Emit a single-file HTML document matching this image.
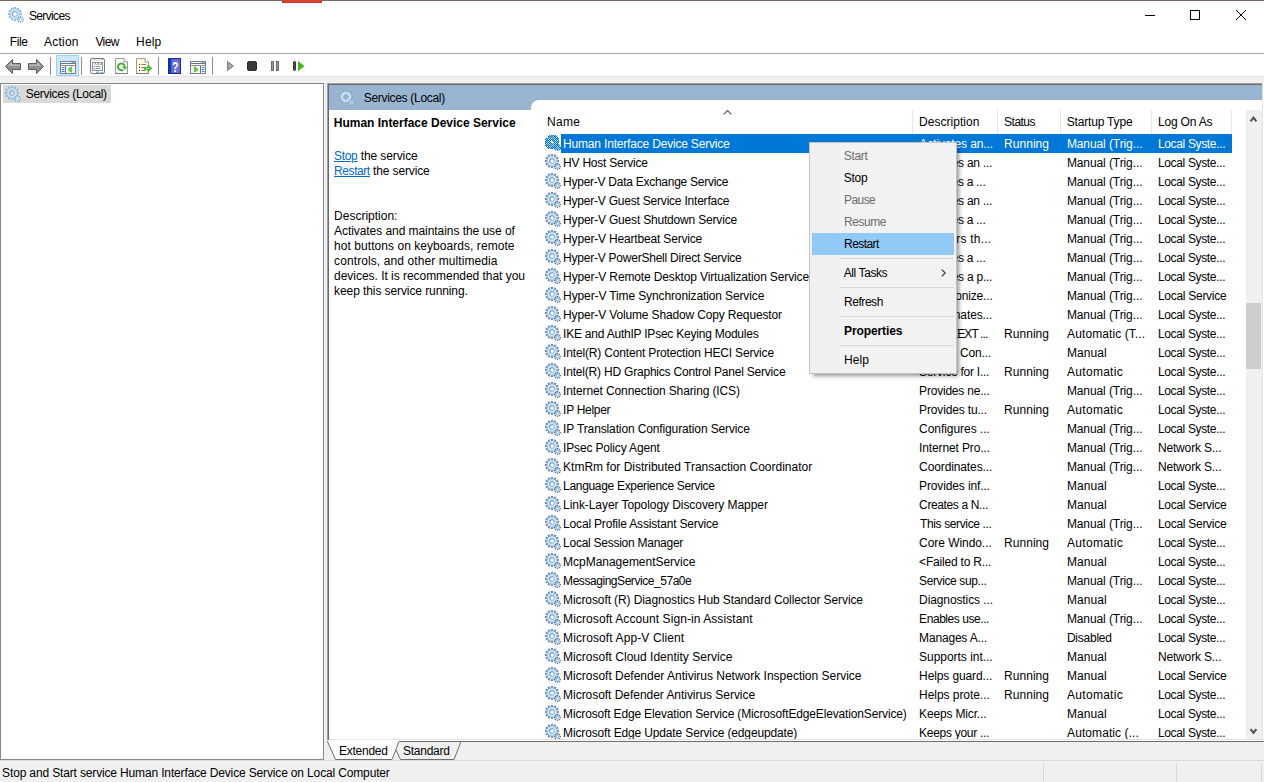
<!DOCTYPE html>
<html lang="en"><head><meta charset="utf-8"><title>Services</title>
<style>
html,body{margin:0;padding:0}
body{width:1264px;height:782px;overflow:hidden;background:#fff;color:#000;position:relative;
 font-family:"Liberation Sans",sans-serif;font-size:12px;cursor:default}
div,span,i,svg{position:absolute;display:block}
.t{white-space:pre;line-height:16px;height:16px;font-style:normal}
.b{font-weight:bold}
.u{text-decoration:underline;text-underline-offset:1px}
#titlebar,#menubar,#toolbar,#left,#right,#lhdr,#tabs,#status{left:0;top:0;width:1264px;height:782px}
#topline{left:0;top:0;width:1264px;height:1px;background:#76685f}
#redbar{left:282px;top:0;width:40px;height:3px;background:linear-gradient(#d4483a,#c8381f)}
#menuline{left:0;top:53px;width:1264px;height:1px;background:#a8a8a8}
#toolline{left:0;top:76px;width:1264px;height:1px;background:#e2e2e2}
#gap{left:0;top:77px;width:1264px;height:683px;background:#f0f0f0}
#leftbox{left:0;top:83px;width:322px;height:675px;background:#fff;border:1px solid #828790}
#treesel{left:3px;top:85px;width:108px;height:18px;background:#d9d9d9}
#rightbox{left:327px;top:83px;width:936px;height:657px;background:#fff;border-left:1px solid #a0a0a0;border-top:1px solid #a0a0a0;box-shadow:inset 1px 1px 0 #696969}
#rightedge{left:1262px;top:83px;width:2px;height:659px;background:#fff;border-left:1px solid #e3e3e3;box-sizing:border-box}
#botline{left:329px;top:739px;width:933px;height:1px;background:#e3e3e3}
#rightbot{left:327px;top:741px;width:937px;height:1px;background:#6e6e6e}
#band{left:329px;top:85px;width:933px;height:25px;background:#99b4d1}
#listbg{left:531px;top:100px;width:731px;height:639px;background:#fff;border-top-left-radius:8px}
.sep{top:110px;width:1px;height:24px;background:#e5e5e5}
#rows{left:0;top:0;width:1246px;height:739px;overflow:hidden}
#selrow{left:561px;top:134px;width:671px;height:19px;background:#0078d7}
#vscroll{left:1246px;top:110px;width:16px;height:629px;background:#f0f0f0;overflow:hidden}
#thumb{left:0;top:193px;width:15px;height:66px;background:#cdcdcd}
#status{}
#statbg{left:0;top:760px;width:1264px;height:22px;background:#f0f0f0;border-top:1px solid #d9d9d9;box-sizing:border-box}
.ssep{top:763px;width:1px;height:19px;background:#d7d7d7}
#cmenu{left:809px;top:142px;width:146px;height:230px;background:#f2f2f2;border:1px solid #c4c4c4;box-shadow:3px 3px 4px -1px rgba(0,0,0,.42)}
#cmgut{left:0;top:0;width:30px;height:230px;background:#f0f0f0}
#cmhl{left:2px;top:90px;width:142px;height:22px;background:#91c9f7}
.cmsep{left:30px;width:114px;height:1px;background:#d7d7d7;margin-top:-143px}
</style></head>
<body>
<svg width="0" height="0" style="left:0;top:0"><defs>
<symbol id="gearb" viewBox="0 0 16 16" shape-rendering="crispEdges"><path fill="#98b0d0" d="M3 0h2v1h-2zM9 0h2v1h-2zM0 3h1v1h-1zM13 3h1v1h-1zM0 4h1v1h-1zM7 4h1v1h-1zM13 4h1v1h-1zM6 5h3v1h-3zM5 6h1v1h-1zM4 7h2v1h-2zM5 8h1v1h-1zM0 9h1v1h-1zM13 9h1v1h-1zM0 10h1v1h-1zM15 10h1v1h-1zM12 12h1v1h-1zM3 13h2v1h-2zM9 14h1v1h-1zM15 14h1v1h-1z"/><path fill="#90a8c8" d="M6 0h2v1h-2zM0 6h1v1h-1zM13 6h1v1h-1zM0 7h1v1h-1zM13 7h1v1h-1zM6 13h2v1h-2z"/><path fill="#88a8c8" d="M3 1h1v1h-1zM10 1h1v1h-1zM1 3h1v1h-1zM12 3h1v1h-1zM1 10h1v1h-1zM3 12h1v1h-1z"/><path fill="#90b0d0" d="M4 1h1v1h-1zM9 1h1v1h-1zM1 4h1v1h-1zM6 4h1v1h-1zM12 4h1v1h-1zM5 5h1v1h-1zM4 6h1v1h-1zM1 9h1v1h-1zM4 12h1v1h-1zM9 13h1v1h-1zM10 15h1v1h-1zM14 15h1v1h-1z"/><path fill="#a0c0d8" d="M5 1h1v1h-1zM8 1h1v1h-1zM1 5h1v1h-1zM12 5h1v1h-1zM1 8h1v1h-1zM12 8h1v1h-1zM13 10h1v1h-1zM5 12h1v1h-1zM8 12h1v1h-1z"/><path fill="#a0c0e0" d="M6 1h2v1h-2zM1 6h1v1h-1zM12 6h1v1h-1zM1 7h1v1h-1zM12 7h1v1h-1zM6 12h2v1h-2z"/><path fill="#a0b8d8" d="M3 2h1v1h-1zM10 2h1v1h-1zM2 3h1v1h-1zM11 3h1v1h-1zM9 6h1v1h-1zM9 7h1v1h-1zM8 8h1v1h-1zM6 9h2v1h-2zM2 10h1v1h-1zM3 11h1v1h-1z"/><path fill="#a8c8e0" d="M4 2h1v1h-1zM9 2h1v1h-1zM2 4h1v1h-1zM5 4h1v1h-1zM8 4h1v1h-1zM11 4h1v1h-1zM4 5h1v1h-1zM4 8h1v1h-1zM2 9h1v1h-1zM11 9h1v1h-1zM11 10h1v1h-1zM4 11h1v1h-1zM9 11h2v1h-2zM14 13h1v1h-1zM11 14h1v1h-1zM13 14h1v1h-1z"/><path fill="#b8d8e8" d="M5 2h1v1h-1zM8 2h1v1h-1zM2 5h1v1h-1zM11 5h1v1h-1zM2 8h1v1h-1zM11 8h1v1h-1zM5 11h1v1h-1zM8 11h1v1h-1z"/><path fill="#b8d8f0" d="M6 2h2v1h-2zM2 6h1v1h-1zM11 6h1v1h-1zM2 7h1v1h-1zM11 7h1v1h-1zM6 11h2v1h-2z"/><path fill="#b0d0e8" d="M3 3h1v1h-1zM10 3h1v1h-1zM3 10h1v1h-1zM11 11h1v1h-1zM13 11h1v1h-1zM11 13h1v1h-1zM13 13h1v1h-1zM12 14h1v1h-1z"/><path fill="#c8e8f8" d="M4 3h1v1h-1zM9 3h1v1h-1zM3 4h2v1h-2zM9 4h2v1h-2zM3 9h2v1h-2zM9 9h1v1h-1zM4 10h1v1h-1z"/><path fill="#d0e8f8" d="M5 3h4v1h-4zM3 5h1v1h-1zM10 5h1v1h-1zM3 6h1v1h-1zM10 6h1v1h-1zM3 7h1v1h-1zM10 7h1v1h-1zM3 8h1v1h-1zM10 8h1v1h-1zM5 10h4v1h-4z"/><path fill="#b0c8e0" d="M9 5h1v1h-1zM5 9h1v1h-1zM11 12h1v1h-1zM13 12h1v1h-1zM12 13h1v1h-1z"/><path fill="#98b8d0" d="M8 6h1v1h-1zM8 7h1v1h-1zM6 8h2v1h-2z"/><path fill="#b0d0e0" d="M9 8h1v1h-1zM8 9h1v1h-1zM12 11h1v1h-1z"/><path fill="#c0e0f0" d="M10 9h1v1h-1zM9 10h1v1h-1z"/><path fill="#8098c0" d="M12 9h1v1h-1zM9 12h1v1h-1zM12 15h1v1h-1z"/><path fill="#80a0c0" d="M10 10h1v1h-1zM14 10h1v1h-1zM15 12h1v1h-1z"/><path fill="#a8c0e0" d="M12 10h1v1h-1zM14 11h1v1h-1zM10 12h1v1h-1zM14 12h1v1h-1zM10 13h1v1h-1z"/><path fill="#88a0c0" d="M10 14h1v1h-1zM14 14h1v1h-1z"/></symbol>
<symbol id="geart" viewBox="0 0 16 16" shape-rendering="crispEdges"><path fill="#c8d0d8" d="M3 0h2v1h-2zM9 0h2v1h-2zM0 3h1v1h-1zM13 3h1v1h-1zM0 4h1v1h-1zM13 4h1v1h-1zM0 9h1v1h-1zM13 9h1v1h-1zM0 10h1v1h-1zM3 13h2v1h-2zM9 14h1v1h-1zM15 14h1v1h-1z"/><path fill="#90b0d0" d="M6 0h2v1h-2zM0 6h1v1h-1zM13 6h1v1h-1zM0 7h1v1h-1zM13 7h1v1h-1zM6 13h2v1h-2z"/><path fill="#d0d0d8" d="M2 1h1v1h-1zM11 1h1v1h-1zM1 2h1v1h-1zM12 2h1v1h-1zM8 6h1v1h-1zM8 7h1v1h-1zM6 8h2v1h-2zM15 10h1v1h-1zM1 11h1v1h-1zM2 12h1v1h-1zM15 13h1v1h-1z"/><path fill="#88b0d0" d="M3 1h1v1h-1zM10 1h1v1h-1zM1 3h1v1h-1zM12 3h1v1h-1zM1 10h1v1h-1zM3 12h1v1h-1z"/><path fill="#a0b8d8" d="M4 1h1v1h-1zM9 1h1v1h-1zM1 4h1v1h-1zM12 4h1v1h-1zM1 9h1v1h-1zM4 12h1v1h-1z"/><path fill="#c0d0e0" d="M5 1h1v1h-1zM8 1h1v1h-1zM1 5h1v1h-1zM12 5h1v1h-1zM1 8h1v1h-1zM12 8h1v1h-1zM13 10h1v1h-1zM5 12h1v1h-1zM8 12h1v1h-1z"/><path fill="#a0c0e0" d="M6 1h2v1h-2zM1 6h1v1h-1zM12 6h1v1h-1zM1 7h1v1h-1zM12 7h1v1h-1zM6 12h2v1h-2z"/><path fill="#a8c8e0" d="M3 2h1v1h-1zM10 2h1v1h-1zM2 3h1v1h-1zM11 3h1v1h-1zM2 10h1v1h-1zM12 10h1v1h-1zM3 11h1v1h-1z"/><path fill="#a0c8e8" d="M4 2h1v1h-1zM9 2h1v1h-1zM2 4h1v1h-1zM11 4h1v1h-1zM2 9h1v1h-1zM11 9h1v1h-1zM4 11h1v1h-1zM9 11h1v1h-1z"/><path fill="#b0d8f0" d="M5 2h1v1h-1zM8 2h1v1h-1zM2 5h1v1h-1zM11 5h1v1h-1zM2 8h1v1h-1zM11 8h1v1h-1zM5 11h1v1h-1zM8 11h1v1h-1zM11 11h1v1h-1zM13 11h1v1h-1zM11 13h1v1h-1zM13 13h1v1h-1zM12 14h1v1h-1z"/><path fill="#b8d8f0" d="M6 2h2v1h-2zM2 6h1v1h-1zM11 6h1v1h-1zM2 7h1v1h-1zM11 7h1v1h-1zM6 11h2v1h-2z"/><path fill="#a8d0e8" d="M3 3h1v1h-1zM10 3h1v1h-1zM3 10h1v1h-1zM11 10h1v1h-1zM10 11h1v1h-1zM14 12h1v1h-1z"/><path fill="#c0e0f8" d="M4 3h1v1h-1zM9 3h1v1h-1zM3 4h1v1h-1zM10 4h1v1h-1zM3 9h1v1h-1zM4 10h1v1h-1z"/><path fill="#c8e8f8" d="M5 3h4v1h-4zM4 4h1v1h-1zM9 4h1v1h-1zM3 5h1v1h-1zM10 5h1v1h-1zM3 6h1v1h-1zM10 6h1v1h-1zM3 7h1v1h-1zM10 7h1v1h-1zM3 8h1v1h-1zM10 8h1v1h-1zM4 9h1v1h-1zM9 9h1v1h-1zM5 10h4v1h-4z"/><path fill="#a0c0d0" d="M5 4h1v1h-1zM4 5h1v1h-1z"/><path fill="#90a0b0" d="M6 4h1v1h-1zM4 6h1v1h-1z"/><path fill="#98a8b8" d="M7 4h1v1h-1zM4 7h1v1h-1z"/><path fill="#b0c0d8" d="M8 4h1v1h-1zM4 8h1v1h-1z"/><path fill="#a0a8b8" d="M5 5h1v1h-1z"/><path fill="#c8c8d0" d="M6 5h1v1h-1zM5 6h1v1h-1z"/><path fill="#c8d0d0" d="M7 5h1v1h-1zM5 7h1v1h-1z"/><path fill="#a8b8c8" d="M8 5h1v1h-1zM5 8h1v1h-1z"/><path fill="#b0c8d8" d="M9 5h1v1h-1zM5 9h1v1h-1z"/><path fill="#a8b8d0" d="M9 6h1v1h-1zM6 9h1v1h-1z"/><path fill="#a8c0d0" d="M9 7h1v1h-1zM7 9h1v1h-1z"/><path fill="#b8c8d8" d="M8 8h1v1h-1z"/><path fill="#b8d0e0" d="M9 8h1v1h-1zM8 9h1v1h-1z"/><path fill="#c0e0f0" d="M10 9h1v1h-1zM12 11h1v1h-1zM11 12h1v1h-1zM13 12h1v1h-1z"/><path fill="#78a0c0" d="M12 9h1v1h-1zM9 12h1v1h-1zM12 15h1v1h-1z"/><path fill="#b8e0f0" d="M9 10h1v1h-1z"/><path fill="#80a0c0" d="M10 10h1v1h-1zM14 10h1v1h-1zM15 12h1v1h-1z"/><path fill="#c0d8e0" d="M14 11h1v1h-1z"/><path fill="#a8c8e8" d="M10 12h1v1h-1z"/><path fill="#ffffff" d="M12 12h1v1h-1z"/><path fill="#b8c8d0" d="M9 13h1v1h-1z"/><path fill="#b8d0e8" d="M10 13h1v1h-1z"/><path fill="#c8e0f0" d="M12 13h1v1h-1z"/><path fill="#c0d8e8" d="M14 13h1v1h-1zM11 14h1v1h-1zM13 14h1v1h-1z"/><path fill="#80a0c8" d="M10 14h1v1h-1zM14 14h1v1h-1z"/><path fill="#c0c8d0" d="M10 15h1v1h-1zM14 15h1v1h-1z"/></symbol>
<symbol id="gearl" viewBox="0 0 16 16" shape-rendering="crispEdges"><path fill="#e8f0f8" d="M3 0h1v1h-1zM10 0h1v1h-1zM0 3h1v1h-1zM13 3h1v1h-1zM0 10h1v1h-1zM3 13h1v1h-1z"/><path fill="#e0e8f0" d="M4 0h1v1h-1zM9 0h1v1h-1zM0 4h1v1h-1zM13 4h1v1h-1zM6 5h1v1h-1zM5 6h1v1h-1zM0 9h1v1h-1zM13 9h1v1h-1zM4 13h1v1h-1zM10 15h1v1h-1zM14 15h1v1h-1z"/><path fill="#90b0d8" d="M6 0h2v1h-2zM0 6h1v1h-1zM13 6h1v1h-1zM0 7h1v1h-1zM13 7h1v1h-1zM6 13h2v1h-2z"/><path fill="#f0f8f8" d="M2 1h1v1h-1zM11 1h1v1h-1zM1 2h1v1h-1zM12 2h1v1h-1zM1 11h1v1h-1zM2 12h1v1h-1z"/><path fill="#88b0d0" d="M3 1h1v1h-1zM10 1h1v1h-1zM1 3h1v1h-1zM12 3h1v1h-1zM1 10h1v1h-1zM3 12h1v1h-1z"/><path fill="#a0c0e0" d="M4 1h1v1h-1zM9 1h1v1h-1zM1 4h1v1h-1zM12 4h1v1h-1zM1 9h1v1h-1zM4 12h1v1h-1z"/><path fill="#d0e0f0" d="M5 1h1v1h-1zM8 1h1v1h-1zM1 5h1v1h-1zM12 5h1v1h-1zM1 8h1v1h-1zM12 8h1v1h-1zM14 11h1v1h-1zM5 12h1v1h-1zM8 12h1v1h-1zM9 13h1v1h-1z"/><path fill="#a0c8e0" d="M6 1h2v1h-2zM1 6h1v1h-1zM12 6h1v1h-1zM1 7h1v1h-1zM12 7h1v1h-1zM6 12h2v1h-2z"/><path fill="#b0d0e8" d="M3 2h1v1h-1zM10 2h1v1h-1zM2 3h1v1h-1zM11 3h1v1h-1zM2 10h1v1h-1zM3 11h1v1h-1zM14 12h1v1h-1z"/><path fill="#a0c8e8" d="M4 2h1v1h-1zM9 2h1v1h-1zM2 4h1v1h-1zM11 4h1v1h-1zM2 9h1v1h-1zM11 9h1v1h-1zM4 11h1v1h-1zM9 11h1v1h-1z"/><path fill="#b0d8f0" d="M5 2h1v1h-1zM8 2h1v1h-1zM2 5h1v1h-1zM11 5h1v1h-1zM2 8h1v1h-1zM11 8h1v1h-1zM5 11h1v1h-1zM8 11h1v1h-1zM11 11h1v1h-1zM13 11h1v1h-1zM11 13h1v1h-1zM13 13h1v1h-1zM12 14h1v1h-1z"/><path fill="#b8d8f0" d="M6 2h2v1h-2zM2 6h1v1h-1zM11 6h1v1h-1zM2 7h1v1h-1zM11 7h1v1h-1zM6 11h2v1h-2z"/><path fill="#a8d0e8" d="M3 3h1v1h-1zM10 3h1v1h-1zM3 10h1v1h-1zM11 10h1v1h-1zM10 11h1v1h-1z"/><path fill="#c0e0f8" d="M4 3h1v1h-1zM9 3h1v1h-1zM3 4h1v1h-1zM10 4h1v1h-1zM3 9h1v1h-1zM4 10h1v1h-1z"/><path fill="#c8e8f8" d="M5 3h4v1h-4zM4 4h1v1h-1zM9 4h1v1h-1zM3 5h1v1h-1zM10 5h1v1h-1zM3 6h1v1h-1zM10 6h1v1h-1zM3 7h1v1h-1zM10 7h1v1h-1zM3 8h1v1h-1zM10 8h1v1h-1zM4 9h1v1h-1zM9 9h1v1h-1zM5 10h4v1h-4z"/><path fill="#a0c0d0" d="M5 4h1v1h-1zM4 5h1v1h-1z"/><path fill="#90a0b0" d="M6 4h1v1h-1zM4 6h1v1h-1z"/><path fill="#98a8b8" d="M7 4h1v1h-1zM4 7h1v1h-1z"/><path fill="#b0c0d8" d="M8 4h1v1h-1zM4 8h1v1h-1z"/><path fill="#a0b0c0" d="M5 5h1v1h-1z"/><path fill="#e8e8f0" d="M7 5h1v1h-1zM5 7h1v1h-1z"/><path fill="#b0c0d0" d="M8 5h1v1h-1zM5 8h1v1h-1z"/><path fill="#b0c8d8" d="M9 5h1v1h-1zM5 9h1v1h-1z"/><path fill="#e8f0f0" d="M8 6h1v1h-1zM8 7h1v1h-1zM6 8h2v1h-2zM9 14h1v1h-1zM15 14h1v1h-1z"/><path fill="#a8b8d0" d="M9 6h1v1h-1zM6 9h1v1h-1z"/><path fill="#a8c0d0" d="M9 7h1v1h-1zM7 9h1v1h-1z"/><path fill="#c0d0e0" d="M8 8h1v1h-1z"/><path fill="#b8d0e0" d="M9 8h1v1h-1zM8 9h1v1h-1z"/><path fill="#c0e0f0" d="M10 9h1v1h-1zM12 11h1v1h-1zM11 12h1v1h-1zM13 12h1v1h-1zM10 13h1v1h-1z"/><path fill="#78a0c0" d="M12 9h1v1h-1zM9 12h1v1h-1zM12 15h1v1h-1z"/><path fill="#b8e0f0" d="M9 10h1v1h-1z"/><path fill="#80a0c0" d="M10 10h1v1h-1z"/><path fill="#a8c8e0" d="M12 10h1v1h-1z"/><path fill="#c8e0f0" d="M13 10h1v1h-1zM12 13h1v1h-1z"/><path fill="#80a0c8" d="M14 10h1v1h-1zM15 12h1v1h-1z"/><path fill="#f0f0f8" d="M15 10h1v1h-1zM15 13h1v1h-1z"/><path fill="#a8c8e8" d="M10 12h1v1h-1z"/><path fill="#ffffff" d="M12 12h1v1h-1z"/><path fill="#d0e8f8" d="M14 13h1v1h-1z"/><path fill="#88a8c8" d="M10 14h1v1h-1zM14 14h1v1h-1z"/><path fill="#c8e0f8" d="M11 14h1v1h-1zM13 14h1v1h-1z"/></symbol>
<symbol id="gear" viewBox="0 0 16 16" shape-rendering="crispEdges"><path fill="#e0e8f0" d="M3 0h1v1h-1zM10 0h1v1h-1zM0 3h1v1h-1zM13 3h1v1h-1zM8 7h1v1h-1zM7 8h1v1h-1zM0 10h1v1h-1zM3 13h1v1h-1z"/><path fill="#c8d0e0" d="M4 0h1v1h-1zM9 0h1v1h-1zM0 4h1v1h-1zM13 4h1v1h-1zM0 9h1v1h-1zM4 13h1v1h-1zM10 15h1v1h-1zM14 15h1v1h-1z"/><path fill="#f0f0f8" d="M5 0h1v1h-1zM8 0h1v1h-1zM0 5h1v1h-1zM13 5h1v1h-1zM0 8h1v1h-1zM13 8h1v1h-1zM5 13h1v1h-1zM8 13h1v1h-1z"/><path fill="#6888b0" d="M6 0h2v1h-2zM3 1h1v1h-1zM10 1h1v1h-1zM1 3h1v1h-1zM12 3h1v1h-1zM0 6h1v1h-1zM13 6h1v1h-1zM0 7h1v1h-1zM13 7h1v1h-1zM1 10h1v1h-1zM3 12h1v1h-1zM6 13h2v1h-2z"/><path fill="#d8e0e8" d="M2 1h1v1h-1zM11 1h1v1h-1zM1 2h1v1h-1zM12 2h1v1h-1zM8 6h1v1h-1zM6 8h1v1h-1zM1 11h1v1h-1zM2 12h1v1h-1z"/><path fill="#7898b8" d="M4 1h1v1h-1zM9 1h1v1h-1zM1 4h1v1h-1zM12 4h1v1h-1zM1 9h1v1h-1zM4 12h1v1h-1z"/><path fill="#d8e0f0" d="M5 1h1v1h-1zM8 1h1v1h-1zM1 5h1v1h-1zM12 5h1v1h-1zM1 8h1v1h-1zM12 8h1v1h-1zM5 12h1v1h-1zM8 12h1v1h-1z"/><path fill="#80a0c0" d="M6 1h2v1h-2zM6 4h1v1h-1zM1 6h1v1h-1zM4 6h1v1h-1zM12 6h1v1h-1zM1 7h1v1h-1zM12 7h1v1h-1zM6 12h2v1h-2z"/><path fill="#90a8c8" d="M3 2h1v1h-1zM10 2h1v1h-1zM2 3h1v1h-1zM11 3h1v1h-1zM2 10h1v1h-1zM3 11h1v1h-1z"/><path fill="#90b0d0" d="M4 2h1v1h-1zM9 2h1v1h-1zM2 4h1v1h-1zM11 4h1v1h-1zM2 9h1v1h-1zM12 10h1v1h-1zM4 11h1v1h-1zM9 11h2v1h-2zM10 12h1v1h-1z"/><path fill="#a8c8e0" d="M5 2h1v1h-1zM8 2h1v1h-1zM2 5h1v1h-1zM11 5h1v1h-1zM2 8h1v1h-1zM11 8h1v1h-1zM5 11h1v1h-1zM8 11h1v1h-1zM11 11h1v1h-1zM13 11h1v1h-1zM11 13h1v1h-1zM13 13h1v1h-1zM12 14h1v1h-1z"/><path fill="#b8d8f0" d="M6 2h2v1h-2zM2 6h1v1h-1zM11 6h1v1h-1zM2 7h1v1h-1zM11 7h1v1h-1zM6 11h2v1h-2z"/><path fill="#a0c0d8" d="M3 3h1v1h-1zM10 3h1v1h-1zM9 7h1v1h-1zM7 9h1v1h-1zM3 10h1v1h-1z"/><path fill="#c8e8f8" d="M4 3h6v1h-6zM3 4h2v1h-2zM9 4h2v1h-2zM3 5h1v1h-1zM10 5h1v1h-1zM3 6h1v1h-1zM10 6h1v1h-1zM3 7h1v1h-1zM10 7h1v1h-1zM3 8h1v1h-1zM10 8h1v1h-1zM3 9h2v1h-2zM9 9h1v1h-1zM4 10h5v1h-5z"/><path fill="#b0d0e0" d="M5 4h1v1h-1zM4 5h1v1h-1zM9 10h1v1h-1z"/><path fill="#88a8c0" d="M7 4h1v1h-1zM4 7h1v1h-1z"/><path fill="#b0d0e8" d="M8 4h1v1h-1zM4 8h1v1h-1zM12 11h1v1h-1z"/><path fill="#6880a8" d="M5 5h1v1h-1z"/><path fill="#d0d8e0" d="M6 5h1v1h-1zM5 6h1v1h-1zM9 14h1v1h-1zM15 14h1v1h-1z"/><path fill="#d0d8e8" d="M7 5h1v1h-1zM5 7h1v1h-1z"/><path fill="#80a0b8" d="M8 5h1v1h-1zM5 8h1v1h-1z"/><path fill="#b8d8e8" d="M9 5h1v1h-1zM5 9h1v1h-1zM10 9h1v1h-1z"/><path fill="#a0b8d0" d="M9 6h1v1h-1zM6 9h1v1h-1z"/><path fill="#98b8d0" d="M8 8h1v1h-1z"/><path fill="#c0d8f0" d="M9 8h1v1h-1zM8 9h1v1h-1z"/><path fill="#88a8c8" d="M11 9h1v1h-1z"/><path fill="#507090" d="M12 9h1v1h-1zM9 12h1v1h-1zM15 12h1v1h-1zM12 15h1v1h-1z"/><path fill="#b8c8d8" d="M13 9h1v1h-1zM9 13h1v1h-1z"/><path fill="#e8f0f0" d="M14 9h1v1h-1z"/><path fill="#507098" d="M10 10h1v1h-1z"/><path fill="#98b0d0" d="M11 10h1v1h-1z"/><path fill="#b8d0e0" d="M13 10h1v1h-1zM14 11h1v1h-1zM10 13h1v1h-1zM11 14h1v1h-1zM13 14h1v1h-1z"/><path fill="#587898" d="M14 10h1v1h-1z"/><path fill="#e0e0e8" d="M15 10h1v1h-1zM15 13h1v1h-1z"/><path fill="#b8d0e8" d="M11 12h1v1h-1zM13 12h1v1h-1z"/><path fill="#ffffff" d="M12 12h1v1h-1z"/><path fill="#a0b8d8" d="M14 12h1v1h-1z"/><path fill="#c0d8e8" d="M12 13h1v1h-1z"/><path fill="#c8e0f0" d="M14 13h1v1h-1z"/><path fill="#6080a0" d="M10 14h1v1h-1zM14 14h1v1h-1z"/></symbol>
<symbol id="gearsel" viewBox="0 0 16 16" shape-rendering="crispEdges"><path fill="#e0e8f0" d="M3 0h1v1h-1zM0 3h1v1h-1zM8 7h1v1h-1zM7 8h1v1h-1z"/><path fill="#0078d7" d="M4 0h1v1h-1zM6 0h1v1h-1zM8 0h1v1h-1zM10 0h1v1h-1zM3 1h1v1h-1zM5 1h1v1h-1zM7 1h1v1h-1zM9 1h1v1h-1zM11 1h1v1h-1zM4 2h1v1h-1zM6 2h1v1h-1zM8 2h1v1h-1zM10 2h1v1h-1zM12 2h1v1h-1zM1 3h1v1h-1zM3 3h1v1h-1zM5 3h1v1h-1zM7 3h1v1h-1zM9 3h1v1h-1zM11 3h1v1h-1zM13 3h1v1h-1zM0 4h1v1h-1zM2 4h1v1h-1zM4 4h1v1h-1zM6 4h1v1h-1zM8 4h1v1h-1zM10 4h1v1h-1zM12 4h1v1h-1zM1 5h1v1h-1zM3 5h1v1h-1zM5 5h1v1h-1zM7 5h1v1h-1zM9 5h1v1h-1zM11 5h1v1h-1zM13 5h1v1h-1zM0 6h1v1h-1zM2 6h1v1h-1zM4 6h1v1h-1zM8 6h1v1h-1zM10 6h1v1h-1zM12 6h1v1h-1zM1 7h1v1h-1zM3 7h1v1h-1zM5 7h1v1h-1zM9 7h1v1h-1zM11 7h1v1h-1zM13 7h1v1h-1zM0 8h1v1h-1zM2 8h1v1h-1zM4 8h1v1h-1zM6 8h1v1h-1zM8 8h1v1h-1zM10 8h1v1h-1zM12 8h1v1h-1zM1 9h1v1h-1zM3 9h1v1h-1zM5 9h1v1h-1zM7 9h1v1h-1zM9 9h1v1h-1zM11 9h1v1h-1zM13 9h1v1h-1zM0 10h1v1h-1zM2 10h1v1h-1zM4 10h1v1h-1zM6 10h1v1h-1zM8 10h1v1h-1zM10 10h1v1h-1zM12 10h1v1h-1zM14 10h1v1h-1zM1 11h1v1h-1zM3 11h1v1h-1zM5 11h1v1h-1zM7 11h1v1h-1zM9 11h1v1h-1zM11 11h1v1h-1zM13 11h1v1h-1zM2 12h1v1h-1zM4 12h1v1h-1zM6 12h1v1h-1zM8 12h1v1h-1zM10 12h1v1h-1zM12 12h1v1h-1zM14 12h1v1h-1zM3 13h1v1h-1zM5 13h1v1h-1zM7 13h1v1h-1zM9 13h1v1h-1zM11 13h1v1h-1zM13 13h1v1h-1zM15 13h1v1h-1zM10 14h1v1h-1zM12 14h1v1h-1zM14 14h1v1h-1z"/><path fill="#f0f0f8" d="M5 0h1v1h-1zM0 5h1v1h-1zM13 8h1v1h-1zM8 13h1v1h-1z"/><path fill="#6888b0" d="M7 0h1v1h-1zM10 1h1v1h-1zM12 3h1v1h-1zM13 6h1v1h-1zM0 7h1v1h-1zM1 10h1v1h-1zM3 12h1v1h-1zM6 13h1v1h-1z"/><path fill="#c8d0e0" d="M9 0h1v1h-1zM13 4h1v1h-1zM0 9h1v1h-1zM4 13h1v1h-1zM10 15h1v1h-1zM14 15h1v1h-1z"/><path fill="#d8e0e8" d="M2 1h1v1h-1zM1 2h1v1h-1z"/><path fill="#7898b8" d="M4 1h1v1h-1zM1 4h1v1h-1z"/><path fill="#80a0c0" d="M6 1h1v1h-1zM1 6h1v1h-1zM12 7h1v1h-1zM7 12h1v1h-1z"/><path fill="#d8e0f0" d="M8 1h1v1h-1zM12 5h1v1h-1zM1 8h1v1h-1zM5 12h1v1h-1z"/><path fill="#90a8c8" d="M3 2h1v1h-1zM2 3h1v1h-1z"/><path fill="#a8c8e0" d="M5 2h1v1h-1zM2 5h1v1h-1zM11 8h1v1h-1zM8 11h1v1h-1z"/><path fill="#b8d8f0" d="M7 2h1v1h-1zM11 6h1v1h-1zM2 7h1v1h-1zM6 11h1v1h-1z"/><path fill="#90b0d0" d="M9 2h1v1h-1zM11 4h1v1h-1zM2 9h1v1h-1zM4 11h1v1h-1zM10 11h1v1h-1z"/><path fill="#c8e8f8" d="M4 3h1v1h-1zM6 3h1v1h-1zM8 3h1v1h-1zM3 4h1v1h-1zM9 4h1v1h-1zM10 5h1v1h-1zM3 6h1v1h-1zM10 7h1v1h-1zM3 8h1v1h-1zM4 9h1v1h-1zM5 10h1v1h-1zM7 10h1v1h-1z"/><path fill="#a0c0d8" d="M10 3h1v1h-1zM3 10h1v1h-1z"/><path fill="#b0d0e0" d="M5 4h1v1h-1zM4 5h1v1h-1zM9 10h1v1h-1z"/><path fill="#88a8c0" d="M7 4h1v1h-1zM4 7h1v1h-1z"/><path fill="#d0d8e0" d="M6 5h1v1h-1zM5 6h1v1h-1zM9 14h1v1h-1zM15 14h1v1h-1z"/><path fill="#80a0b8" d="M8 5h1v1h-1zM5 8h1v1h-1z"/><path fill="#a0b8d0" d="M9 6h1v1h-1zM6 9h1v1h-1z"/><path fill="#c0d8f0" d="M9 8h1v1h-1zM8 9h1v1h-1z"/><path fill="#b8d8e8" d="M10 9h1v1h-1z"/><path fill="#507090" d="M12 9h1v1h-1zM9 12h1v1h-1zM15 12h1v1h-1zM12 15h1v1h-1z"/><path fill="#e8f0f0" d="M14 9h1v1h-1z"/><path fill="#98b0d0" d="M11 10h1v1h-1z"/><path fill="#b8d0e0" d="M13 10h1v1h-1zM14 11h1v1h-1zM10 13h1v1h-1zM11 14h1v1h-1zM13 14h1v1h-1z"/><path fill="#e0e0e8" d="M15 10h1v1h-1z"/><path fill="#b0d0e8" d="M12 11h1v1h-1z"/><path fill="#b8d0e8" d="M11 12h1v1h-1zM13 12h1v1h-1z"/><path fill="#c0d8e8" d="M12 13h1v1h-1z"/><path fill="#c8e0f0" d="M14 13h1v1h-1z"/></symbol>
</defs></svg>
<div id="gap"></div><div id="topline"></div><div id="redbar"></div>
<div id="titlebar"><svg class="gi" width="16" height="16" style="left:8px;top:7px"><use href="#gearl"/></svg><span class="t" style="left:28.90px;top:8px;letter-spacing:-0.629px">Services</span><svg width="140" height="30" style="left:1124px;top:0" viewBox="0 0 140 30" fill="none" stroke="#000" stroke-width="1"><path d="M21 15.5h10"/><rect x="66.5" y="10.5" width="9" height="9"/><path d="M112 10l10 10M122 10l-10 10"/></svg></div>
<div id="menubar"><span class="t" style="left:9.70px;top:34px;letter-spacing:-0.367px">File</span><span class="t" style="left:44.10px;top:34px;letter-spacing:0.200px">Action</span><span class="t" style="left:95.40px;top:34px;letter-spacing:-0.567px">View</span><span class="t" style="left:136.10px;top:34px;letter-spacing:0.133px">Help</span><div id="menuline"></div></div>
<div id="toolbar"><svg width="320" height="24" style="left:0;top:54px" viewBox="0 54 320 24"><path d="M5.5 66.5l7-7v4h8v6h-8v4z" fill="#8f8f8f" stroke="#5c5c5c"/><path d="M8 66l4-4v2.500h7.500v1.500z" fill="#b9b9b9"/><path d="M43.5 66.5l-7-7v4h-8v6h8v4z" fill="#8f8f8f" stroke="#5c5c5c"/><path d="M41 66l-4-4v2.500h-7.500v1.500z" fill="#b9b9b9"/><path d="M50.5 57v18M81.5 57v18M158.5 57v18M212.500 57v18" stroke="#8e8e8e" fill="none"/><rect x="56.5" y="55.5" width="22" height="20" fill="#cce8ff" stroke="#99d1ff"/><rect x="60.5" y="61.5" width="15" height="12" fill="#fff" stroke="#808080"/><path d="M61 63.5h14" stroke="#5d7596"/><path d="M61 65.5h14" stroke="#8c8c8c"/><path d="M71.600 62.5h1M73.400 62.5h1" stroke="#5d7596"/><path d="M65.5 66v7" stroke="#56759d"/><path d="M62 67.5h2.500M62 69.5h2.500M62 71.5h2.500" stroke="#2f7fd6"/><path d="M72 66h2.500v7h-2.500z" fill="#f1f1f1"/><path d="M71.300 66.800v5.400l-3.400-2.700z" fill="#7fd068" stroke="#3db321" stroke-width=".9" stroke-linejoin="round"/><rect x="90.5" y="58.5" width="14" height="15" rx="1.6" fill="#fff" stroke="#6f7a8c"/><path d="M91.500 60h10.500" stroke="#d0d0d0"/><path d="M102.200 59.500h1" stroke="#5b7fb0"/><rect x="92.5" y="62.5" width="10" height="8" fill="#fafafa" stroke="#8e8e8e"/><rect x="95" y="62" width="8" height="2.600" fill="#949494"/><path d="M96 63.500h1.800M99.200 63.500h1.800" stroke="#fff"/><path d="M95.500 66.500h5M95.500 68.500h5" stroke="#9a9a9a"/><path d="M93.500 66.500h1.200" stroke="#2f9cf0"/><path d="M93.500 68.500h1.200" stroke="#8a8a8a"/><path d="M96 72.300h3" stroke="#4cc4f5" stroke-width="1.500"/><path d="M100 72.500h3" stroke="#b0b0b0"/><path d="M115.5 58.5h8.500l3.500 3.500v11.500h-12z" fill="#fdfdfd" stroke="#9a9a9a"/><path d="M124 58.500v3.500h3.500" fill="#fff" stroke="#9a9a9a"/><path d="M115 73.500h13" stroke="#7c7c7c"/><path d="M124.700 66.500a3.400 3.400 0 1 0-1.600 3.300" fill="none" stroke="#3db321" stroke-width="1.900"/><path d="M122 66.600h5.200l-2.300 3.500z" fill="#3db321"/><path d="M136.500 58.500h8.500l3.500 3.500v11.500h-12z" fill="#fffbdc" stroke="#9a9a9a"/><path d="M145 58.500v3.500h3.500" fill="#fff" stroke="#9a9a9a"/><path d="M136 73.500h13" stroke="#7c7c7c"/><path d="M139 64.500h1M139 67.500h1M139 70.500h1" stroke="#222"/><path d="M141.500 64.500h4.500M141.500 67.500h3M141.500 70.500h4" stroke="#7a7a7a"/><path d="M144.300 67.400h3.700v-2.400l3.800 3.400-3.800 3.400v-2.400h-3.700z" fill="#52c038" stroke="#2fa018" stroke-width=".7"/><path d="M146 68.400h3.500" stroke="#b6ecc0" stroke-width=".8"/><rect x="168" y="58" width="13" height="16" fill="#666cd4"/><rect x="168" y="58" width="3.200" height="16" fill="#1236bc"/><rect x="168.500" y="58.500" width="12" height="15" fill="none" stroke="#1b2a96"/><text x="175.200" y="71.600" font-family="Liberation Sans, sans-serif" font-size="15" font-weight="bold" fill="#fff" text-anchor="middle" textLength="6.500" lengthAdjust="spacingAndGlyphs">?</text><rect x="190.500" y="61.500" width="15" height="12" fill="#fff" stroke="#808080"/><path d="M191 63.500h14" stroke="#5d7596"/><path d="M191 65.500h14" stroke="#8c8c8c"/><path d="M201.600 62.500h1M203.400 62.500h1" stroke="#5d7596"/><path d="M200.500 66v7" stroke="#56759d"/><path d="M202 67.500h2.500M202 69.500h2.500M202 71.500h2.500" stroke="#2f7fd6"/><path d="M191.500 66h2v7h-2z" fill="#f1f1f1"/><path d="M194.700 66.800v5.400l3.400-2.700z" fill="#7fd068" stroke="#3db321" stroke-width=".9" stroke-linejoin="round"/><path d="M227.500 61.500v9l6-4.500z" fill="#a9a9a9" stroke="#7c7c7c"/><rect x="247.500" y="61.500" width="9" height="9" rx="1.500" fill="#3b3b3b" stroke="#2d2d2d"/><rect x="271.500" y="61.500" width="2" height="9" fill="#9a9a9a" stroke="#6c6c6c"/><rect x="276.500" y="61.500" width="2" height="9" fill="#9a9a9a" stroke="#6c6c6c"/><rect x="293.500" y="61.500" width="2" height="9" rx=".8" fill="#5a5a5a" stroke="#333"/><path d="M298 61v10.200l6.500-5.100z" fill="#3fb91f"/></svg><div id="toolline"></div></div>
<div id="left"><div id="leftbox"></div><div id="treesel"></div><svg class="gi" width="16" height="16" style="left:5px;top:86px"><use href="#geart"/></svg><span class="t" style="left:25.70px;top:86px;letter-spacing:-0.307px">Services (Local)</span></div>
<div id="right">
<div id="rightbox"></div><div id="rightedge"></div><div id="rightbot"></div><div id="band"></div><div id="listbg"></div><svg class="gi" width="16" height="16" style="left:339px;top:90px"><use href="#gearb"/></svg><span class="t" style="left:363.70px;top:90px;letter-spacing:-0.300px">Services (Local)</span>
<span class="t b" style="left:333.80px;top:115px;letter-spacing:-0.010px">Human Interface Device Service</span><span class="t u" style="left:333.90px;top:148px;letter-spacing:-0.267px;color:#0066cc">Stop</span><span class="t" style="left:360.70px;top:148px;letter-spacing:-0.100px">the service</span><span class="t u" style="left:334.10px;top:163px;letter-spacing:-0.433px;color:#0066cc">Restart</span><span class="t" style="left:373.10px;top:163px;letter-spacing:-0.140px">the service</span><span class="t" style="left:334.10px;top:208px;letter-spacing:-0.000px">Description:</span><span class="t" style="left:334.00px;top:223px;letter-spacing:-0.058px">Activates and maintains the use of</span><span class="t" style="left:334.10px;top:238px;letter-spacing:0.052px">hot buttons on keyboards, remote</span><span class="t" style="left:334.10px;top:253px;letter-spacing:0.093px">controls, and other multimedia</span><span class="t" style="left:334.10px;top:268px;letter-spacing:-0.035px">devices. It is recommended that you</span><span class="t" style="left:334.10px;top:283px;letter-spacing:-0.092px">keep this service running.</span>
<div id="lhdr"><i class="sep" style="left:912px"></i><i class="sep" style="left:997px"></i><i class="sep" style="left:1060px"></i><i class="sep" style="left:1151px"></i><i class="sep" style="left:1231px"></i><svg width="9" height="6" style="left:723px;top:109px" viewBox="0 0 9 6" fill="none" stroke="#5a5a5a" stroke-width="1.15"><path d="M.6 5.400l3.900-3.900 3.900 3.900"/></svg><span class="t" style="left:547.10px;top:114px;letter-spacing:0.233px">Name</span><span class="t" style="left:919.10px;top:114px;letter-spacing:0.030px">Description</span><span class="t" style="left:1004.10px;top:114px;letter-spacing:-0.520px">Status</span><span class="t" style="left:1066.70px;top:114px;letter-spacing:-0.173px">Startup Type</span><span class="t" style="left:1158.00px;top:114px;letter-spacing:-0.200px">Log On As</span></div>
<div id="rows">
<div id="selrow"></div>
<svg class="gi" width="16" height="16" style="left:545px;top:135px"><use href="#gearsel"/></svg><span class="t" style="left:563.10px;top:136px;letter-spacing:-0.186px;color:#fff">Human Interface Device Service</span><span class="t" style="left:919.30px;top:136px;letter-spacing:-0.114px;color:#fff">Activates an...</span><span class="t" style="left:1004.10px;top:136px;letter-spacing:0.033px;color:#fff">Running</span><span class="t" style="left:1066.90px;top:136px;letter-spacing:-0.093px;color:#fff">Manual (Trig...</span><span class="t" style="left:1157.90px;top:136px;letter-spacing:-0.338px;color:#fff">Local Syste...</span>
<svg class="gi" width="16" height="16" style="left:545px;top:154px"><use href="#gear"/></svg><span class="t" style="left:563.10px;top:155px;letter-spacing:-0.236px">HV Host Service</span><span class="t" style="left:919.10px;top:155px;letter-spacing:-0.243px">Provides an ...</span><span class="t" style="left:1066.90px;top:155px;letter-spacing:-0.093px">Manual (Trig...</span><span class="t" style="left:1157.90px;top:155px;letter-spacing:-0.338px">Local Syste...</span>
<svg class="gi" width="16" height="16" style="left:545px;top:173px"><use href="#gear"/></svg><span class="t" style="left:563.10px;top:174px;letter-spacing:-0.261px">Hyper-V Data Exchange Service</span><span class="t" style="left:919.10px;top:174px;letter-spacing:-0.262px">Provides a ...</span><span class="t" style="left:1066.90px;top:174px;letter-spacing:-0.093px">Manual (Trig...</span><span class="t" style="left:1157.90px;top:174px;letter-spacing:-0.338px">Local Syste...</span>
<svg class="gi" width="16" height="16" style="left:545px;top:192px"><use href="#gear"/></svg><span class="t" style="left:563.10px;top:193px;letter-spacing:-0.213px">Hyper-V Guest Service Interface</span><span class="t" style="left:919.10px;top:193px;letter-spacing:-0.243px">Provides an ...</span><span class="t" style="left:1066.90px;top:193px;letter-spacing:-0.093px">Manual (Trig...</span><span class="t" style="left:1157.90px;top:193px;letter-spacing:-0.338px">Local Syste...</span>
<svg class="gi" width="16" height="16" style="left:545px;top:211px"><use href="#gear"/></svg><span class="t" style="left:563.10px;top:212px;letter-spacing:-0.186px">Hyper-V Guest Shutdown Service</span><span class="t" style="left:919.10px;top:212px;letter-spacing:-0.262px">Provides a ...</span><span class="t" style="left:1066.90px;top:212px;letter-spacing:-0.093px">Manual (Trig...</span><span class="t" style="left:1157.90px;top:212px;letter-spacing:-0.338px">Local Syste...</span>
<svg class="gi" width="16" height="16" style="left:545px;top:230px"><use href="#gear"/></svg><span class="t" style="left:563.10px;top:231px;letter-spacing:-0.175px">Hyper-V Heartbeat Service</span><span class="t" style="left:919.10px;top:231px;letter-spacing:0.200px">Monitors th...</span><span class="t" style="left:1066.90px;top:231px;letter-spacing:-0.093px">Manual (Trig...</span><span class="t" style="left:1157.90px;top:231px;letter-spacing:-0.338px">Local Syste...</span>
<svg class="gi" width="16" height="16" style="left:545px;top:249px"><use href="#gear"/></svg><span class="t" style="left:563.10px;top:250px;letter-spacing:-0.231px">Hyper-V PowerShell Direct Service</span><span class="t" style="left:919.10px;top:250px;letter-spacing:-0.262px">Provides a ...</span><span class="t" style="left:1066.90px;top:250px;letter-spacing:-0.093px">Manual (Trig...</span><span class="t" style="left:1157.90px;top:250px;letter-spacing:-0.338px">Local Syste...</span>
<svg class="gi" width="16" height="16" style="left:545px;top:268px"><use href="#gear"/></svg><span class="t" style="left:563.10px;top:269px;letter-spacing:-0.134px">Hyper-V Remote Desktop Virtualization Service</span><span class="t" style="left:919.10px;top:269px;letter-spacing:-0.243px">Provides a p...</span><span class="t" style="left:1066.90px;top:269px;letter-spacing:-0.093px">Manual (Trig...</span><span class="t" style="left:1157.90px;top:269px;letter-spacing:-0.338px">Local Syste...</span>
<svg class="gi" width="16" height="16" style="left:545px;top:287px"><use href="#gear"/></svg><span class="t" style="left:563.10px;top:288px;letter-spacing:-0.120px">Hyper-V Time Synchronization Service</span><span class="t" style="left:919.10px;top:288px;letter-spacing:-0.185px">Synchronize...</span><span class="t" style="left:1066.90px;top:288px;letter-spacing:-0.093px">Manual (Trig...</span><span class="t" style="left:1157.90px;top:288px;letter-spacing:-0.275px">Local Service</span>
<svg class="gi" width="16" height="16" style="left:545px;top:306px"><use href="#gear"/></svg><span class="t" style="left:563.10px;top:307px;letter-spacing:-0.149px">Hyper-V Volume Shadow Copy Requestor</span><span class="t" style="left:919.10px;top:307px;letter-spacing:-0.108px">Coordinates...</span><span class="t" style="left:1066.90px;top:307px;letter-spacing:-0.093px">Manual (Trig...</span><span class="t" style="left:1157.90px;top:307px;letter-spacing:-0.338px">Local Syste...</span>
<svg class="gi" width="16" height="16" style="left:545px;top:325px"><use href="#gear"/></svg><span class="t" style="left:563.10px;top:326px;letter-spacing:-0.224px">IKE and AuthIP IPsec Keying Modules</span><span class="t" style="left:920.10px;top:326px;letter-spacing:-0.892px">The IKEEXT ...</span><span class="t" style="left:1004.10px;top:326px;letter-spacing:0.033px">Running</span><span class="t" style="left:1067.10px;top:326px;letter-spacing:0.093px">Automatic (T...</span><span class="t" style="left:1157.90px;top:326px;letter-spacing:-0.338px">Local Syste...</span>
<svg class="gi" width="16" height="16" style="left:545px;top:344px"><use href="#gear"/></svg><span class="t" style="left:563.10px;top:345px;letter-spacing:-0.164px">Intel(R) Content Protection HECI Service</span><span class="t" style="left:919.10px;top:345px;letter-spacing:-0.193px">Intel(R) Con...</span><span class="t" style="left:1066.90px;top:345px;letter-spacing:0.100px">Manual</span><span class="t" style="left:1157.90px;top:345px;letter-spacing:-0.338px">Local Syste...</span>
<svg class="gi" width="16" height="16" style="left:545px;top:363px"><use href="#gear"/></svg><span class="t" style="left:563.10px;top:364px;letter-spacing:-0.202px">Intel(R) HD Graphics Control Panel Service</span><span class="t" style="left:919.10px;top:364px;letter-spacing:-0.247px">Service for I...</span><span class="t" style="left:1004.10px;top:364px;letter-spacing:0.033px">Running</span><span class="t" style="left:1067.10px;top:364px;letter-spacing:0.275px">Automatic</span><span class="t" style="left:1157.90px;top:364px;letter-spacing:-0.338px">Local Syste...</span>
<svg class="gi" width="16" height="16" style="left:545px;top:382px"><use href="#gear"/></svg><span class="t" style="left:563.10px;top:383px;letter-spacing:-0.122px">Internet Connection Sharing (ICS)</span><span class="t" style="left:919.10px;top:383px;letter-spacing:-0.208px">Provides ne...</span><span class="t" style="left:1066.90px;top:383px;letter-spacing:-0.093px">Manual (Trig...</span><span class="t" style="left:1157.90px;top:383px;letter-spacing:-0.338px">Local Syste...</span>
<svg class="gi" width="16" height="16" style="left:545px;top:401px"><use href="#gear"/></svg><span class="t" style="left:563.10px;top:402px;letter-spacing:-0.300px">IP Helper</span><span class="t" style="left:919.10px;top:402px;letter-spacing:-0.154px">Provides tu...</span><span class="t" style="left:1004.10px;top:402px;letter-spacing:0.033px">Running</span><span class="t" style="left:1067.10px;top:402px;letter-spacing:0.275px">Automatic</span><span class="t" style="left:1157.90px;top:402px;letter-spacing:-0.338px">Local Syste...</span>
<svg class="gi" width="16" height="16" style="left:545px;top:420px"><use href="#gear"/></svg><span class="t" style="left:563.10px;top:421px;letter-spacing:-0.126px">IP Translation Configuration Service</span><span class="t" style="left:919.10px;top:421px;letter-spacing:-0.054px">Configures ...</span><span class="t" style="left:1066.90px;top:421px;letter-spacing:-0.093px">Manual (Trig...</span><span class="t" style="left:1157.90px;top:421px;letter-spacing:-0.338px">Local Syste...</span>
<svg class="gi" width="16" height="16" style="left:545px;top:439px"><use href="#gear"/></svg><span class="t" style="left:563.10px;top:440px;letter-spacing:-0.159px">IPsec Policy Agent</span><span class="t" style="left:919.10px;top:440px;letter-spacing:-0.136px">Internet Pro...</span><span class="t" style="left:1066.90px;top:440px;letter-spacing:-0.093px">Manual (Trig...</span><span class="t" style="left:1157.90px;top:440px;letter-spacing:-0.155px">Network S...</span>
<svg class="gi" width="16" height="16" style="left:545px;top:458px"><use href="#gear"/></svg><span class="t" style="left:563.10px;top:459px;letter-spacing:-0.009px">KtmRm for Distributed Transaction Coordinator</span><span class="t" style="left:919.10px;top:459px;letter-spacing:-0.115px">Coordinates...</span><span class="t" style="left:1066.90px;top:459px;letter-spacing:-0.093px">Manual (Trig...</span><span class="t" style="left:1157.90px;top:459px;letter-spacing:-0.155px">Network S...</span>
<svg class="gi" width="16" height="16" style="left:545px;top:477px"><use href="#gear"/></svg><span class="t" style="left:563.10px;top:478px;letter-spacing:-0.319px">Language Experience Service</span><span class="t" style="left:919.10px;top:478px;letter-spacing:-0.136px">Provides inf...</span><span class="t" style="left:1066.90px;top:478px;letter-spacing:0.100px">Manual</span><span class="t" style="left:1157.90px;top:478px;letter-spacing:-0.338px">Local Syste...</span>
<svg class="gi" width="16" height="16" style="left:545px;top:496px"><use href="#gear"/></svg><span class="t" style="left:563.10px;top:497px;letter-spacing:-0.069px">Link-Layer Topology Discovery Mapper</span><span class="t" style="left:919.10px;top:497px;letter-spacing:-0.377px">Creates a N...</span><span class="t" style="left:1066.90px;top:497px;letter-spacing:0.100px">Manual</span><span class="t" style="left:1157.90px;top:497px;letter-spacing:-0.275px">Local Service</span>
<svg class="gi" width="16" height="16" style="left:545px;top:515px"><use href="#gear"/></svg><span class="t" style="left:563.10px;top:516px;letter-spacing:-0.180px">Local Profile Assistant Service</span><span class="t" style="left:920.10px;top:516px;letter-spacing:-0.380px">This service ...</span><span class="t" style="left:1066.90px;top:516px;letter-spacing:-0.093px">Manual (Trig...</span><span class="t" style="left:1157.90px;top:516px;letter-spacing:-0.275px">Local Service</span>
<svg class="gi" width="16" height="16" style="left:545px;top:534px"><use href="#gear"/></svg><span class="t" style="left:563.10px;top:535px;letter-spacing:-0.260px">Local Session Manager</span><span class="t" style="left:919.10px;top:535px;letter-spacing:-0.058px">Core Windo...</span><span class="t" style="left:1004.10px;top:535px;letter-spacing:0.033px">Running</span><span class="t" style="left:1067.10px;top:535px;letter-spacing:0.275px">Automatic</span><span class="t" style="left:1157.90px;top:535px;letter-spacing:-0.338px">Local Syste...</span>
<svg class="gi" width="16" height="16" style="left:545px;top:553px"><use href="#gear"/></svg><span class="t" style="left:563.10px;top:554px;letter-spacing:-0.026px">McpManagementService</span><span class="t" style="left:919.10px;top:554px;letter-spacing:-0.193px">&lt;Failed to R...</span><span class="t" style="left:1066.90px;top:554px;letter-spacing:0.100px">Manual</span><span class="t" style="left:1157.90px;top:554px;letter-spacing:-0.338px">Local Syste...</span>
<svg class="gi" width="16" height="16" style="left:545px;top:572px"><use href="#gear"/></svg><span class="t" style="left:563.10px;top:573px;letter-spacing:-0.448px">MessagingService_57a0e</span><span class="t" style="left:919.10px;top:573px;letter-spacing:-0.385px">Service sup...</span><span class="t" style="left:1066.90px;top:573px;letter-spacing:-0.093px">Manual (Trig...</span><span class="t" style="left:1157.90px;top:573px;letter-spacing:-0.338px">Local Syste...</span>
<svg class="gi" width="16" height="16" style="left:545px;top:591px"><use href="#gear"/></svg><span class="t" style="left:563.10px;top:592px;letter-spacing:-0.100px">Microsoft (R) Diagnostics Hub Standard Collector Service</span><span class="t" style="left:919.10px;top:592px;letter-spacing:-0.107px">Diagnostics ...</span><span class="t" style="left:1066.90px;top:592px;letter-spacing:0.100px">Manual</span><span class="t" style="left:1157.90px;top:592px;letter-spacing:-0.338px">Local Syste...</span>
<svg class="gi" width="16" height="16" style="left:545px;top:610px"><use href="#gear"/></svg><span class="t" style="left:563.10px;top:611px;letter-spacing:0.079px">Microsoft Account Sign-in Assistant</span><span class="t" style="left:919.10px;top:611px;letter-spacing:-0.438px">Enables use...</span><span class="t" style="left:1066.90px;top:611px;letter-spacing:-0.093px">Manual (Trig...</span><span class="t" style="left:1157.90px;top:611px;letter-spacing:-0.338px">Local Syste...</span>
<svg class="gi" width="16" height="16" style="left:545px;top:629px"><use href="#gear"/></svg><span class="t" style="left:563.10px;top:630px;letter-spacing:0.110px">Microsoft App-V Client</span><span class="t" style="left:919.10px;top:630px;letter-spacing:-0.182px">Manages A...</span><span class="t" style="left:1066.90px;top:630px;letter-spacing:-0.229px">Disabled</span><span class="t" style="left:1157.90px;top:630px;letter-spacing:-0.338px">Local Syste...</span>
<svg class="gi" width="16" height="16" style="left:545px;top:648px"><use href="#gear"/></svg><span class="t" style="left:563.10px;top:649px;letter-spacing:0.016px">Microsoft Cloud Identity Service</span><span class="t" style="left:919.10px;top:649px;letter-spacing:-0.036px">Supports int...</span><span class="t" style="left:1066.90px;top:649px;letter-spacing:0.100px">Manual</span><span class="t" style="left:1157.90px;top:649px;letter-spacing:-0.155px">Network S...</span>
<svg class="gi" width="16" height="16" style="left:545px;top:667px"><use href="#gear"/></svg><span class="t" style="left:563.10px;top:668px;letter-spacing:-0.007px">Microsoft Defender Antivirus Network Inspection Service</span><span class="t" style="left:919.10px;top:668px;letter-spacing:-0.115px">Helps guard...</span><span class="t" style="left:1004.10px;top:668px;letter-spacing:0.033px">Running</span><span class="t" style="left:1066.90px;top:668px;letter-spacing:0.100px">Manual</span><span class="t" style="left:1157.90px;top:668px;letter-spacing:-0.275px">Local Service</span>
<svg class="gi" width="16" height="16" style="left:545px;top:686px"><use href="#gear"/></svg><span class="t" style="left:563.10px;top:687px;letter-spacing:-0.040px">Microsoft Defender Antivirus Service</span><span class="t" style="left:919.10px;top:687px;letter-spacing:-0.054px">Helps prote...</span><span class="t" style="left:1004.10px;top:687px;letter-spacing:0.033px">Running</span><span class="t" style="left:1067.10px;top:687px;letter-spacing:0.275px">Automatic</span><span class="t" style="left:1157.90px;top:687px;letter-spacing:-0.338px">Local Syste...</span>
<svg class="gi" width="16" height="16" style="left:545px;top:705px"><use href="#gear"/></svg><span class="t" style="left:563.10px;top:706px;letter-spacing:-0.156px">Microsoft Edge Elevation Service (MicrosoftEdgeElevationService)</span><span class="t" style="left:919.10px;top:706px;letter-spacing:-0.158px">Keeps Micr...</span><span class="t" style="left:1066.90px;top:706px;letter-spacing:0.100px">Manual</span><span class="t" style="left:1157.90px;top:706px;letter-spacing:-0.338px">Local Syste...</span>
<svg class="gi" width="16" height="16" style="left:545px;top:724px"><use href="#gear"/></svg><span class="t" style="left:563.10px;top:725px;letter-spacing:-0.146px">Microsoft Edge Update Service (edgeupdate)</span><span class="t" style="left:919.10px;top:725px;letter-spacing:-0.285px">Keeps your ...</span><span class="t" style="left:1067.10px;top:725px;letter-spacing:0.077px">Automatic (...</span><span class="t" style="left:1157.90px;top:725px;letter-spacing:-0.338px">Local Syste...</span>
</div>
<div id="vscroll"><div id="thumb"></div><svg width="16" height="630" style="left:0;top:0" viewBox="0 0 16 630" fill="none" stroke="#505050" stroke-width="2.1"><path d="M4.600 11.300l2.900-3.600 2.900 3.600"/><path d="M4.600 619.200l2.900 3.600 2.900-3.600"/></svg></div><div id="botline"></div>
</div>
<div id="tabs"><svg width="937" height="21" style="left:327px;top:740px" viewBox="327 740 937 21"><path d="M327 740h937v2h-865l-7 18h-56l-8-18z" fill="#fff"/><path d="M327.500 741.500l8 18h56.500l7-18h865" fill="none" stroke="#6e6e6e"/><path d="M396 750l4.500 9.500h53.500l7-18" fill="none" stroke="#6e6e6e"/></svg><span class="t" style="left:339.00px;top:743px;letter-spacing:-0.257px">Extended</span><span class="t" style="left:402.90px;top:743px;letter-spacing:-0.229px">Standard</span></div>
<div id="status"><div id="statbg"></div><span class="t" style="left:2.10px;top:765px;letter-spacing:-0.149px">Stop and Start service Human Interface Device Service on Local Computer</span><i class="ssep" style="left:1043px"></i><i class="ssep" style="left:1176px"></i><i class="ssep" style="left:1261px"></i></div>
<div id="cmenu"><div id="cmgut"></div><div id="cmhl"></div><i class="cmsep" style="top:258px"></i><i class="cmsep" style="top:287px"></i><i class="cmsep" style="top:316px"></i><i class="cmsep" style="top:345px"></i><svg width="6" height="9" style="left:131px;top:126px" viewBox="0 0 6 9" fill="none" stroke="#3a3a3a" stroke-width="1.2"><path d="M.8 .6l3.4 3.4-3.4 3.4"/></svg><span class="t" style="left:33.70px;top:5px;letter-spacing:-0.300px;color:#6d6d6d">Start</span><span class="t" style="left:33.70px;top:27px;letter-spacing:-0.267px">Stop</span><span class="t" style="left:34.10px;top:49px;letter-spacing:-0.600px;color:#6d6d6d">Pause</span><span class="t" style="left:34.10px;top:71px;letter-spacing:-0.480px;color:#6d6d6d">Resume</span><span class="t" style="left:34.10px;top:93px;letter-spacing:-0.567px">Restart</span><span class="t" style="left:33.70px;top:122px;letter-spacing:-0.400px">All Tasks</span><span class="t" style="left:34.10px;top:151px;letter-spacing:-0.467px">Refresh</span><span class="t b" style="left:34.10px;top:180px;letter-spacing:-0.122px">Properties</span><span class="t" style="left:34.10px;top:209px;letter-spacing:0.067px">Help</span></div>
</body></html>
